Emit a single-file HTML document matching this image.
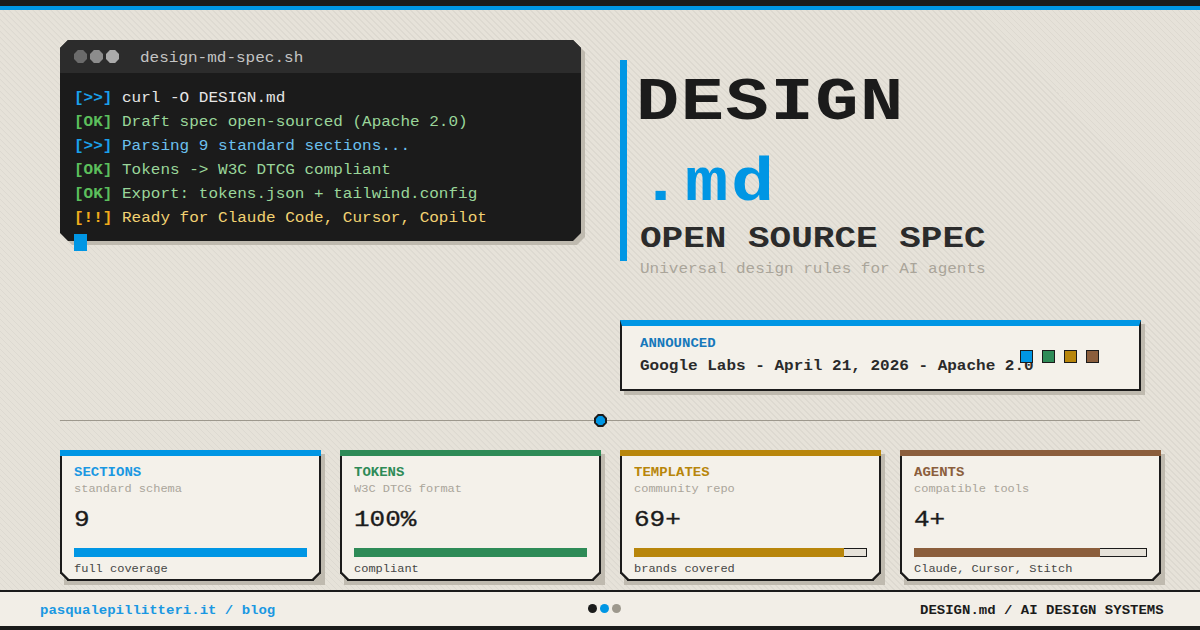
<!DOCTYPE html>
<html><head><meta charset="utf-8">
<style>
*{margin:0;padding:0;box-sizing:border-box}
html,body{width:1200px;height:630px;overflow:hidden}
body{position:relative;background-color:#e6e2d9;
background-image:repeating-linear-gradient(45deg,rgba(0,0,0,0) 0 3px,rgba(0,0,0,.04) 3.24px 4.24px);
font-family:"Liberation Mono",monospace}
.abs{position:absolute}
.t{position:absolute;line-height:1;white-space:pre;font-family:"Liberation Mono",monospace;transform-origin:0 76.6%;transform:scaleY(.87)}
.b{font-weight:700}
.topdark{left:0;top:0;width:1200px;height:6px;background:#1b1b1b}
.topblue{left:0;top:6px;width:1200px;height:4px;background:#0096e4}
/* terminal */
.termsh{left:64px;top:44px;width:521px;height:201px;background:#bfbaaf;
clip-path:polygon(8px 0,calc(100% - 8px) 0,100% 8px,100% calc(100% - 8px),calc(100% - 8px) 100%,8px 100%,0 calc(100% - 8px),0 8px)}
.term{left:60px;top:40px;width:521px;height:201px;background:#1b1b1b;
clip-path:polygon(8px 0,calc(100% - 8px) 0,100% 8px,100% calc(100% - 8px),calc(100% - 8px) 100%,8px 100%,0 calc(100% - 8px),0 8px)}
.termhead{left:0;top:0;width:521px;height:33px;background:#2c2c2c}
.oct{position:absolute;width:13px;height:13px;clip-path:polygon(30% 0,70% 0,100% 30%,100% 70%,70% 100%,30% 100%,0 70%,0 30%)}
.cursor{left:74px;top:234px;width:13px;height:17px;background:#0096e4}
/* title */
.vbar{left:620px;top:60px;width:7px;height:201px;background:#0096e4}
/* cards */
.card{position:absolute;background:#f4f1ea;border:2px solid #1b1b1b}
.shadow{position:absolute;background:#bfbaaf}
.sq{position:absolute;width:13px;height:13px;border:1px solid #1b1b1b;top:350px}
.scard{position:absolute;top:450px;width:261px;height:131px;background:#f4f1ea;border:2px solid #1b1b1b;border-radius:0 0 8px 8px;corner-shape:bevel}
.scard .bar6{position:absolute;left:-2px;top:-2px;width:261px;height:6px}
.sshadow{position:absolute;top:454px;width:261px;height:131px;background:#bfbaaf}
.track{position:absolute;left:12px;top:96px;width:233px;height:9px;border:1px solid #1b1b1b;background:#e6e2d9}
.fill{position:absolute;left:-1px;top:-1px;height:9px}
/* footer */
.foot{left:0;top:590px;width:1200px;height:36px;background:#f2eee7;border-top:2px solid #1b1b1b}
.footdark{left:0;top:626px;width:1200px;height:4px;background:#1b1b1b}
.fdot{position:absolute;width:9px;height:9px;border-radius:50%;top:604px}
</style></head>
<body>
<div class="abs topdark"></div>
<div class="abs topblue"></div>

<!-- terminal -->
<div class="abs termsh"></div>
<div class="abs term">
  <div class="abs termhead">
    <div class="oct" style="left:14px;top:10px;background:#6b6b6b"></div>
    <div class="oct" style="left:30px;top:10px;background:#8c8c8c"></div>
    <div class="oct" style="left:46px;top:10px;background:#ababab"></div>
  </div>
</div>
<div class="t" style="left:140px;top:49.7px;font-size:16px;color:#c4c4c4">design-md-spec.sh</div>
<div class="t" style="left:74px;top:89.7px;font-size:16px;color:#e6e6e6"><span class="b" style="color:#1aa0ea">[&gt;&gt;]</span> curl -O DESIGN.md</div>
<div class="t" style="left:74px;top:113.7px;font-size:16px;color:#9ad69a"><span class="b" style="color:#5cbf5c">[OK]</span> Draft spec open-sourced (Apache 2.0)</div>
<div class="t" style="left:74px;top:137.7px;font-size:16px;color:#6cc0ee"><span class="b" style="color:#1aa0ea">[&gt;&gt;]</span> Parsing 9 standard sections...</div>
<div class="t" style="left:74px;top:161.7px;font-size:16px;color:#9ad69a"><span class="b" style="color:#5cbf5c">[OK]</span> Tokens -&gt; W3C DTCG compliant</div>
<div class="t" style="left:74px;top:185.7px;font-size:16px;color:#9ad69a"><span class="b" style="color:#5cbf5c">[OK]</span> Export: tokens.json + tailwind.config</div>
<div class="t" style="left:74px;top:209.7px;font-size:16px;color:#f2d272"><span class="b" style="color:#f0ac1c">[!!]</span> Ready for Claude Code, Cursor, Copilot</div>
<div class="abs cursor"></div>

<!-- title -->
<div class="abs vbar"></div>
<div class="t b" style="left:636px;top:64.3px;font-size:72px;letter-spacing:1.6px;transform:scaleY(.84);color:#1b1b1b">DESIGN</div>
<div class="t b" style="left:639px;top:145px;font-size:72px;letter-spacing:2.8px;transform:scaleY(.84);color:#0096e4">.md</div>
<div class="t b" style="left:640px;top:219.9px;font-size:36px;transform:scaleY(.84);color:#2b2b2b">OPEN SOURCE SPEC</div>
<div class="t" style="left:640px;top:261.4px;font-size:16px;color:#aaa59a">Universal design rules for AI agents</div>

<!-- announced -->
<div class="shadow" style="left:624px;top:324px;width:521px;height:71px"></div>
<div class="card" style="left:620px;top:320px;width:521px;height:71px;border-top:6px solid #0096e4"></div>
<div class="t b" style="left:640px;top:335.8px;font-size:14px;color:#1678bb">ANNOUNCED</div>
<div class="t b" style="left:640px;top:358.1px;font-size:16px;color:#2a2a2a">Google Labs - April 21, 2026 - Apache 2.0</div>
<div class="sq" style="left:1020px;background:#0096e4"></div>
<div class="sq" style="left:1042px;background:#2e8b57"></div>
<div class="sq" style="left:1064px;background:#b8860b"></div>
<div class="sq" style="left:1086px;background:#8b5e3c"></div>

<!-- divider -->
<div class="abs" style="left:60px;top:420px;width:1080px;height:1px;background:#9d988d"></div>
<div class="abs oct" style="left:594px;top:414px;background:#1b1b1b"></div>
<div class="abs oct" style="left:596px;top:416px;width:9px;height:9px;background:#0096e4"></div>

<!-- stat cards -->
<div class="sshadow" style="left:64px"></div>
<div class="scard" style="left:60px"><div class="bar6" style="background:#0096e4"></div>
  <div class="track" style="border-color:#0096e4"><div class="fill" style="width:233px;background:#0096e4"></div></div></div>
<div class="t b" style="left:74px;top:465.3px;font-size:14px;color:#1a98e2">SECTIONS</div>
<div class="t" style="left:74px;top:482.5px;font-size:12px;color:#aaa59a">standard schema</div>
<div class="t" style="left:74px;top:505.6px;font-size:26px;color:#1b1b1b;-webkit-text-stroke:.4px #1b1b1b">9</div>
<div class="t" style="left:74px;top:562.8px;font-size:12px;color:#464646">full coverage</div>

<div class="sshadow" style="left:344px"></div>
<div class="scard" style="left:340px"><div class="bar6" style="background:#2e8b57"></div>
  <div class="track" style="border-color:#2e8b57"><div class="fill" style="width:233px;background:#2e8b57"></div></div></div>
<div class="t b" style="left:354px;top:465.3px;font-size:14px;color:#2e8b57">TOKENS</div>
<div class="t" style="left:354px;top:482.5px;font-size:12px;color:#aaa59a">W3C DTCG format</div>
<div class="t" style="left:354px;top:505.6px;font-size:26px;color:#1b1b1b;-webkit-text-stroke:.4px #1b1b1b">100%</div>
<div class="t" style="left:354px;top:562.8px;font-size:12px;color:#464646">compliant</div>

<div class="sshadow" style="left:624px"></div>
<div class="scard" style="left:620px"><div class="bar6" style="background:#b8860b"></div>
  <div class="track"><div class="fill" style="width:210px;background:#b8860b"></div></div></div>
<div class="t b" style="left:634px;top:465.3px;font-size:14px;color:#b8860b">TEMPLATES</div>
<div class="t" style="left:634px;top:482.5px;font-size:12px;color:#aaa59a">community repo</div>
<div class="t" style="left:634px;top:505.6px;font-size:26px;color:#1b1b1b;-webkit-text-stroke:.4px #1b1b1b">69+</div>
<div class="t" style="left:634px;top:562.8px;font-size:12px;color:#464646">brands covered</div>

<div class="sshadow" style="left:904px"></div>
<div class="scard" style="left:900px"><div class="bar6" style="background:#8b5e3c"></div>
  <div class="track"><div class="fill" style="width:186px;background:#8b5e3c"></div></div></div>
<div class="t b" style="left:914px;top:465.3px;font-size:14px;color:#8b5e3c">AGENTS</div>
<div class="t" style="left:914px;top:482.5px;font-size:12px;color:#aaa59a">compatible tools</div>
<div class="t" style="left:914px;top:505.6px;font-size:26px;color:#1b1b1b;-webkit-text-stroke:.4px #1b1b1b">4+</div>
<div class="t" style="left:914px;top:562.8px;font-size:12px;color:#464646">Claude, Cursor, Stitch</div>

<!-- footer -->
<div class="abs foot"></div>
<div class="abs footdark"></div>
<div class="t b" style="left:40px;top:603px;font-size:14px;color:#1a98e2">pasqualepillitteri.it / blog</div>
<div class="fdot" style="left:588px;background:#1b1b1b"></div>
<div class="fdot" style="left:600px;background:#0096e4"></div>
<div class="fdot" style="left:612px;background:#9d988d"></div>
<div class="t b" style="left:920px;top:603px;font-size:14px;color:#1b1b1b">DESIGN.md / AI DESIGN SYSTEMS</div>
</body></html>
